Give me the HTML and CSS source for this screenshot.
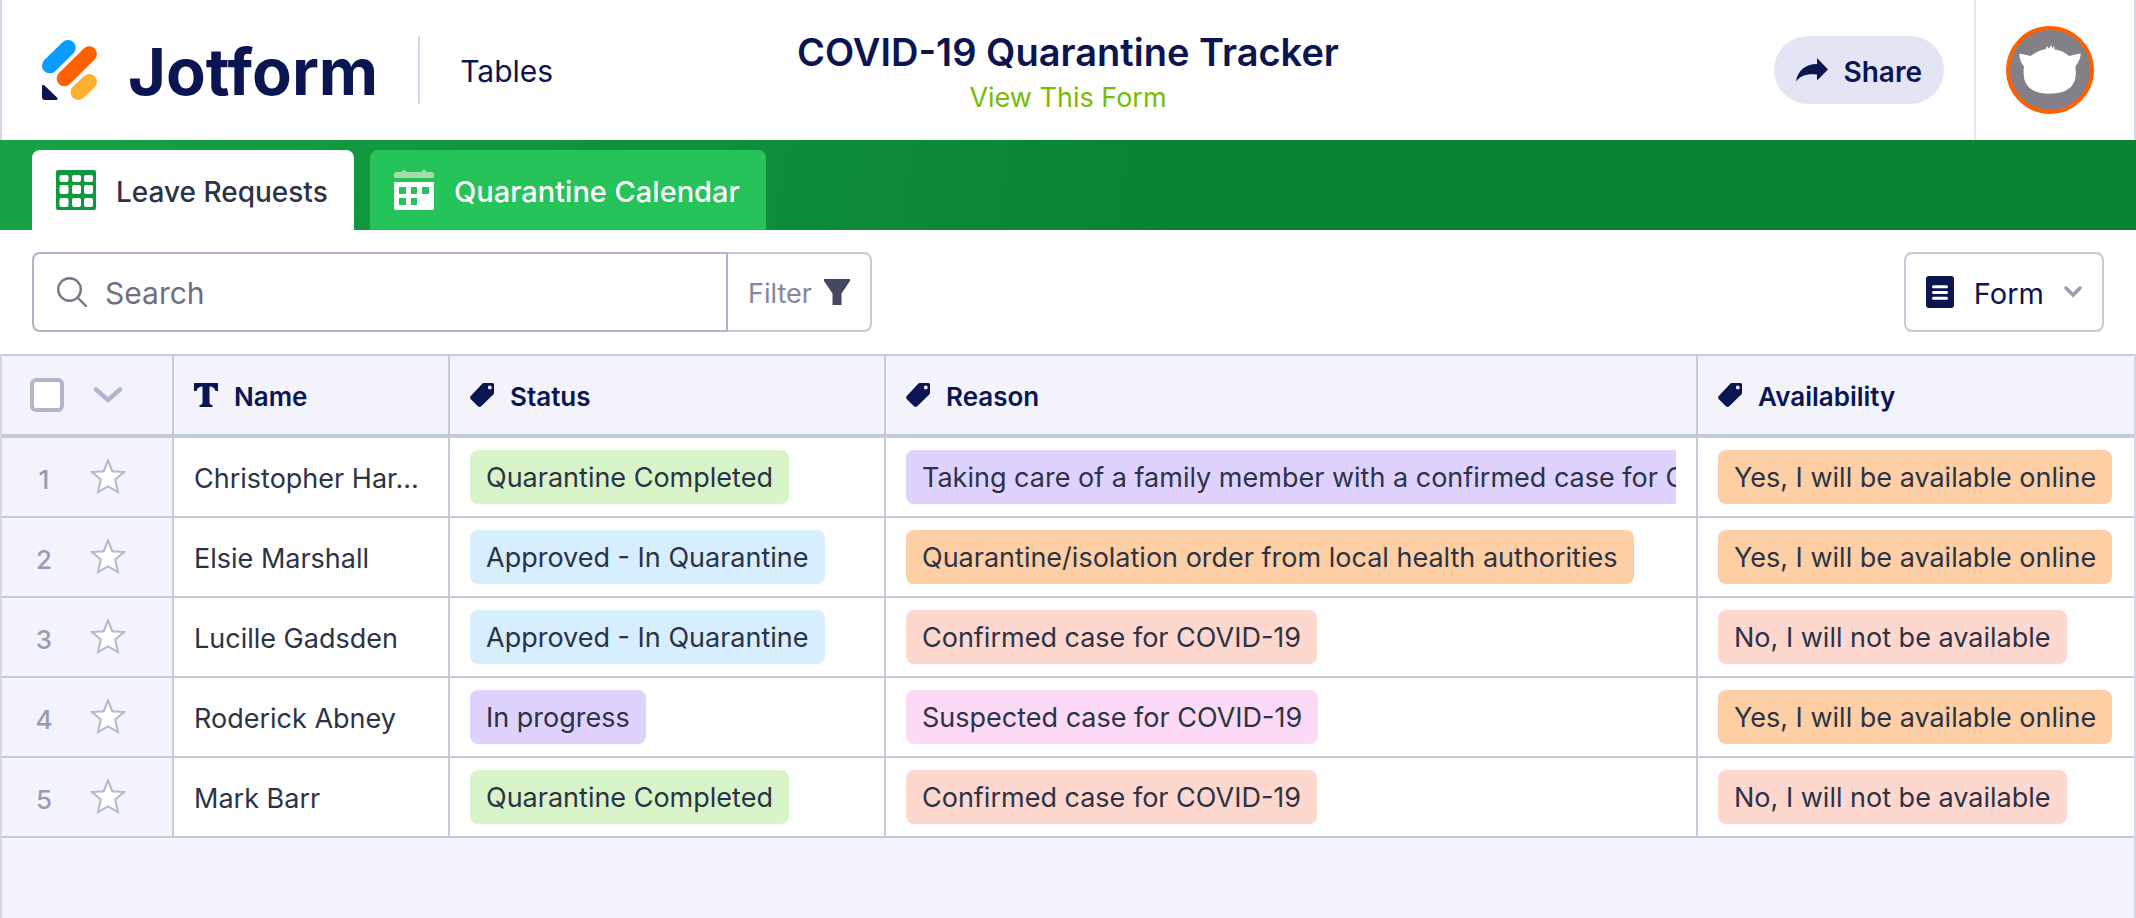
FILE: index.html
```html
<!DOCTYPE html>
<html lang="en">
<head>
<meta charset="utf-8">
<meta name="viewport" content="width=device-width, initial-scale=1">
<title>COVID-19 Quarantine Tracker</title>
<link rel="stylesheet" href="styles.css">
</head>
<body>
<svg class="sprite" aria-hidden="true">
  <symbol id="tag" viewBox="0 0 24 24"><path fill-rule="evenodd" d="M13.6 0H22.500Q24 0 24 1.500V9.800Q24 10.800 23.300 11.500L11.200 23.300Q9.600 24.700 8 23.300L.8 16.200Q-.6 14.600 .8 13L12.200 .7Q12.800 0 13.600 0ZM19.800 2.600A1.900 1.900 0 1 0 19.800 6.400A1.900 1.900 0 1 0 19.800 2.600Z"/></symbol>
  <symbol id="star" viewBox="0 0 36 36"><path d="M18 1.500L22.300 12.200L34 13.100L25.200 20.500L28 33L18 27.300L8 33L10.800 20.500L2 13.100L13.700 12.200Z"/></symbol>
</svg>
<header class="header">
  <div class="brand">
    <a class="logo" href="#">
      <svg class="logo-mark" viewBox="0 0 56 60" aria-hidden="true">
        <g fill="none" stroke-width="15.500" stroke-linecap="round">
          <path stroke="#0a9cff" d="M26 7.750L7.750 25.600"/>
          <path stroke="#ff6100" d="M47.200 13.900L22.400 38.500"/>
          <path stroke="#ffb02e" d="M47.200 41.800L36.300 52.200"/>
        </g>
        <path fill="#0a1551" d="M0 46.500Q0 43.500 2.500 45.600L15 57.500Q16.800 60 14 60H3Q0 60 0 57Z"/>
      </svg>
      <span class="logo-name">Jotform</span>
    </a>
    <span class="product">Tables</span>
  </div>
  <div class="heading">
    <h1>COVID-19 Quarantine Tracker</h1>
    <a href="#">View This Form</a>
  </div>
  <div class="account">
    <button class="share" type="button">
      <svg class="share-icon" viewBox="0 0 32 24" aria-hidden="true"><path d="M21 0L32 11.500L21 22.500V16.500C11 15.500 4.500 17.500 0 23.500C1.500 12.500 9.500 6 21 6Z"/></svg>
      <span>Share</span>
    </button>
    <a class="profile" href="#" aria-label="Profile">
      <svg viewBox="0 0 88 88" aria-hidden="true">
        <circle cx="44" cy="44" r="42" fill="#838088" stroke="#ff6100" stroke-width="4"/>
        <path fill="#fff" d="M13.500 27.500L24.700 30Q31.500 24.500 39.500 23.200L41 20L43 22.700L45.300 18.800L46.300 22.500L48.200 20L48.400 23.200Q56.500 24.500 63.300 30L74.700 27.300Q74.500 34.500 69.300 40.500Q73.500 67.700 43.500 67.700Q14 67.700 18 40.500Q13 34.500 13.500 27.500Z"/>
      </svg>
    </a>
  </div>
</header>
<nav class="tabs">
  <a class="tab tab-active" href="#">
    <svg class="tab-icon" viewBox="0 0 40 40" aria-hidden="true">
      <rect width="40" height="40" rx="2" fill="#0f993f"/>
      <g fill="#fff"><rect x="3.500" y="5" width="9" height="7" rx="2"/><rect x="16" y="5" width="9" height="7" rx="2"/><rect x="28" y="5" width="9" height="7" rx="2"/><rect x="3.500" y="15" width="9" height="9" rx="2"/><rect x="16" y="15" width="9" height="9" rx="2"/><rect x="28" y="15" width="9" height="9" rx="2"/><rect x="3.500" y="28" width="9" height="9" rx="2"/><rect x="16" y="28" width="9" height="9" rx="2"/><rect x="28" y="28" width="9" height="9" rx="2"/></g>
    </svg>
    <span>Leave Requests</span>
  </a>
  <a class="tab tab-calendar" href="#">
    <svg class="tab-icon" viewBox="0 0 40 40" aria-hidden="true">
      <path fill="#a3dda8" d="M2 2H7.500Q8 0 10 0T12.500 2H27.500Q28 0 30 0T32.500 2H38Q40 2.500 40 4V6.500Q40 8 38 8H2Q0 8 0 6.500V4Q0 2.500 2 2Z"/>
      <path fill="#fff" fill-rule="evenodd" d="M0 12H40V38Q40 40 38 40H2Q0 40 0 38ZM5 17V24H12V17ZM17 17V24H23V17ZM28 17V24H35V17ZM5 28V35H12V28ZM17 28V35H23V28Z"/>
    </svg>
    <span>Quarantine Calendar</span>
  </a>
</nav>
<div class="toolbar">
  <form class="finder">
    <label class="search">
      <svg class="search-icon" viewBox="0 0 30 30" fill="none" aria-hidden="true"><circle cx="12.500" cy="12.500" r="11.300"/><path d="M20.500 20.500L29 29"/></svg>
      <input type="search" placeholder="Search" aria-label="Search">
    </label>
    <button class="filter" type="button"><span>Filter</span>
      <svg class="filter-icon" viewBox="0 0 26 26" aria-hidden="true"><path d="M0 0H26V2L17.500 14.500V26H8.500V14.500L0 2Z"/></svg>
    </button>
  </form>
  <button class="form-button" type="button">
    <svg class="form-icon" viewBox="0 0 28 32" aria-hidden="true"><rect width="28" height="32" rx="3" fill="#0a1551"/><path stroke="#fff" stroke-width="3" stroke-linecap="round" d="M7.500 10.700H20.500M7.500 16.500H20.500M7.500 22.300H20.500"/></svg>
    <span>Form</span>
    <svg class="form-chevron" viewBox="0 0 18 12" fill="none" aria-hidden="true"><path stroke="#979bb5" stroke-width="3.500" stroke-linecap="round" d="M2 2L9 9L16 2"/></svg>
  </button>
</div>
<main class="sheet">
  <table>
    <colgroup><col class="col-tools"><col class="col-name"><col class="col-status"><col class="col-reason"><col></colgroup>
    <thead>
      <tr>
        <th><div class="tools"><input class="check" type="checkbox" aria-label="Select all rows"><svg class="head-chevron" viewBox="0 0 30 18" fill="none" aria-hidden="true"><path stroke="#b3b6ca" stroke-width="4.500" stroke-linecap="round" stroke-linejoin="round" d="M3 3.500L15 14L27 3.500"/></svg></div></th>
        <th><div class="label"><svg viewBox="0 0 24 24" aria-hidden="true"><path d="M0 0H24V8H21.500Q20.500 3.500 15.500 3.500V19.500Q15.500 21.500 18.500 22V24H5.500V22Q8.500 21.500 8.500 19.500V3.500Q3.500 3.500 2.500 8H0Z"/></svg><span>Name</span></div></th>
        <th><div class="label"><svg aria-hidden="true"><use href="#tag"/></svg><span>Status</span></div></th>
        <th><div class="label"><svg aria-hidden="true"><use href="#tag"/></svg><span>Reason</span></div></th>
        <th><div class="label"><svg aria-hidden="true"><use href="#tag"/></svg><span>Availability</span></div></th>
      </tr>
    </thead>
    <tbody>
      <tr>
        <td><div class="tools"><span class="number">1</span><button class="star" type="button" aria-label="Star row 1"><svg><use href="#star"/></svg></button></div></td>
        <td>Christopher Har…</td>
        <td><div class="clip"><span class="chip green">Quarantine Completed</span></div></td>
        <td><div class="clip"><span class="chip violet">Taking care of a family member with a confirmed case for COVID-19</span></div></td>
        <td><div class="clip"><span class="chip orange">Yes, I will be available online</span></div></td>
      </tr>
      <tr>
        <td><div class="tools"><span class="number">2</span><button class="star" type="button" aria-label="Star row 2"><svg><use href="#star"/></svg></button></div></td>
        <td>Elsie Marshall</td>
        <td><div class="clip"><span class="chip blue">Approved - In Quarantine</span></div></td>
        <td><div class="clip"><span class="chip orange">Quarantine/isolation order from local health authorities</span></div></td>
        <td><div class="clip"><span class="chip orange">Yes, I will be available online</span></div></td>
      </tr>
      <tr>
        <td><div class="tools"><span class="number">3</span><button class="star" type="button" aria-label="Star row 3"><svg><use href="#star"/></svg></button></div></td>
        <td>Lucille Gadsden</td>
        <td><div class="clip"><span class="chip blue">Approved - In Quarantine</span></div></td>
        <td><div class="clip"><span class="chip red">Confirmed case for COVID-19</span></div></td>
        <td><div class="clip"><span class="chip red">No, I will not be available</span></div></td>
      </tr>
      <tr>
        <td><div class="tools"><span class="number">4</span><button class="star" type="button" aria-label="Star row 4"><svg><use href="#star"/></svg></button></div></td>
        <td>Roderick Abney</td>
        <td><div class="clip"><span class="chip violet">In progress</span></div></td>
        <td><div class="clip"><span class="chip pink">Suspected case for COVID-19</span></div></td>
        <td><div class="clip"><span class="chip orange">Yes, I will be available online</span></div></td>
      </tr>
      <tr>
        <td><div class="tools"><span class="number">5</span><button class="star" type="button" aria-label="Star row 5"><svg><use href="#star"/></svg></button></div></td>
        <td>Mark Barr</td>
        <td><div class="clip"><span class="chip green">Quarantine Completed</span></div></td>
        <td><div class="clip"><span class="chip red">Confirmed case for COVID-19</span></div></td>
        <td><div class="clip"><span class="chip red">No, I will not be available</span></div></td>
      </tr>
    </tbody>
  </table>
</main>
</body>
</html>
```

FILE: styles.css
```css
:root {
  --navy: #0a1551;
  --ink: #2c3345;
  --line: #c3cad8;
  --edge: #d5d6ea;
  --pale: #f3f3fe;
}
* { box-sizing: border-box; }
body {
  margin: 0;
  min-height: 100vh;
  display: flex;
  flex-direction: column;
  background: #fff;
  color: var(--ink);
  font-family: Inter, "Liberation Sans", sans-serif;
  font-size: 27px;
}
a { color: inherit; text-decoration: none; }
button, input { font: inherit; color: inherit; margin: 0; }
button { cursor: pointer; }
svg { display: block; flex: none; }
.sprite { display: none; }

.header {
  display: grid;
  grid-template-columns: 1fr auto 1fr;
  align-items: center;
  height: 140px;
  border: solid var(--edge);
  border-width: 0 2px;
  color: var(--navy);
}
.brand { display: flex; align-items: center; gap: 40px; padding-left: 40px; }
.logo { display: flex; align-items: center; gap: 30px; }
.logo-mark { width: 56px; height: 60px; }
.logo-name { padding-top: 4px; font-size: 65px; font-weight: 700; line-height: 68px; }
.product {
  padding: 2px 0 0 40px;
  border-left: 2px solid var(--edge);
  font-size: 30px;
  line-height: 66px;
}
.heading { padding-top: 4px; text-align: center; }
.heading h1 { margin: 0; font-size: 38px; font-weight: 600; line-height: 52px; }
.heading a { color: #78bb07; line-height: 40px; }
.account { display: flex; align-items: center; justify-content: flex-end; gap: 30px; }
.share {
  display: flex;
  align-items: center;
  gap: 16px;
  height: 68px;
  padding: 0 22px;
  border: 0;
  border-radius: 34px;
  background: #e3e5f5;
  font-size: 28px;
  font-weight: 600;
}
.share-icon { width: 32px; height: 24px; fill: var(--navy); }
.profile {
  display: flex;
  align-items: center;
  height: 140px;
  padding: 0 40px 0 30px;
  border-left: 2px solid #e3e5f0;
}
.profile svg { width: 88px; height: 88px; }

.share span, .tab span, .filter span, .form-button span, .label span { padding-top: 3px; }

.tabs {
  display: flex;
  align-items: flex-end;
  gap: 16px;
  height: 90px;
  padding: 0 32px;
  background: linear-gradient(100deg, #16a346, #0a8332 55%);
}
.tab {
  display: flex;
  align-items: center;
  gap: 20px;
  height: 80px;
  padding: 0 24px;
  border-radius: 8px 8px 0 0;
  background: #26c25a;
  color: #fff;
  font-size: 28px;
  font-weight: 500;
}
.tab-active { min-width: 322px; background: #fff; color: var(--ink); }
.tab-calendar { min-width: 396px; font-size: 29px; }
.tab-icon { width: 40px; height: 40px; }

.toolbar {
  display: flex;
  justify-content: space-between;
  padding: 22px 32px;
}
.finder { display: flex; width: 840px; height: 80px; }
.search {
  display: flex;
  flex: 1;
  align-items: center;
  gap: 18px;
  min-width: 0;
  padding-left: 23px;
  border: 2px solid #b0b3c8;
  border-radius: 8px 0 0 8px;
}
.search-icon { width: 30px; height: 30px; stroke: #767687; stroke-width: 2.400; stroke-linecap: round; }
.search input {
  flex: 1;
  min-width: 0;
  padding: 2px 0 0;
  border: 0;
  outline: 0;
  background: none;
  font-size: 30px;
}
.search input::placeholder { color: #6f6f7f; opacity: 1; }
.filter {
  display: flex;
  align-items: center;
  justify-content: space-between;
  width: 144px;
  padding: 0 20px;
  border: 2px solid var(--line);
  border-left: 0;
  border-radius: 0 8px 8px 0;
  background: #fff;
  color: #82869f;
}
.filter-icon { width: 26px; height: 26px; fill: #454860; }
.form-button {
  display: flex;
  align-items: center;
  gap: 20px;
  min-width: 200px;
  height: 80px;
  padding: 0 20px;
  border: 2px solid var(--line);
  border-radius: 8px;
  background: #fff;
  color: var(--navy);
  font-size: 29px;
}
.form-icon { width: 28px; height: 32px; }
.form-chevron { width: 18px; height: 12px; }

.sheet {
  flex: 1;
  border: solid var(--edge);
  border-width: 0 2px;
  background: var(--pale);
}
table {
  width: 100%;
  table-layout: fixed;
  border-collapse: separate;
  border-spacing: 0;
  border-top: 2px solid var(--line);
}
.col-tools { width: 172px; }
.col-name { width: 276px; }
.col-status { width: 436px; }
.col-reason { width: 812px; }
th, td {
  height: 80px;
  padding: 0 20px;
  border: solid var(--line);
  border-width: 0 2px 2px 0;
  text-align: left;
  white-space: nowrap;
}
th:last-child, td:last-child { border-right: 0; }
th {
  height: 82px;
  border-bottom-width: 4px;
  background: #f2f3fb;
  color: var(--navy);
  font-size: 26px;
  font-weight: 600;
}
td { background: #fff; }
td:nth-child(2) { padding-top: 3px; }
td:first-child { background: var(--pale); }
th:first-child, td:first-child { padding: 0 28px; }
.tools {
  display: grid;
  grid-template-columns: 34px 36px;
  align-items: center;
  gap: 26px;
}
.check {
  appearance: none;
  width: 34px;
  height: 34px;
  border: 4px solid #b3b6ca;
  border-radius: 6px;
  background: #fff;
}
.head-chevron { width: 30px; height: 18px; justify-self: center; }
.number {
  width: 28px;
  padding-top: 4px;
  color: #979bb5;
  font-size: 26px;
  font-weight: 500;
  text-align: center;
}
.star { padding: 0; border: 0; background: none; }
.star svg { width: 36px; height: 36px; fill: #fff; stroke: #b3b8cb; stroke-width: 2; }
.label { display: flex; align-items: center; gap: 16px; }
.label svg { width: 24px; height: 24px; fill: var(--navy); }
.clip { overflow: hidden; }
.chip {
  display: block;
  width: max-content;
  padding: 2px 16px 0;
  border-radius: 8px;
  line-height: 52px;
}
.green { background: #daf4ca; }
.violet { background: #dfd2fe; }
.blue { background: #d6eefd; }
.orange { background: #fecfa4; }
.red { background: #fed8cf; }
.pink { background: #fcdaf5; }
```
